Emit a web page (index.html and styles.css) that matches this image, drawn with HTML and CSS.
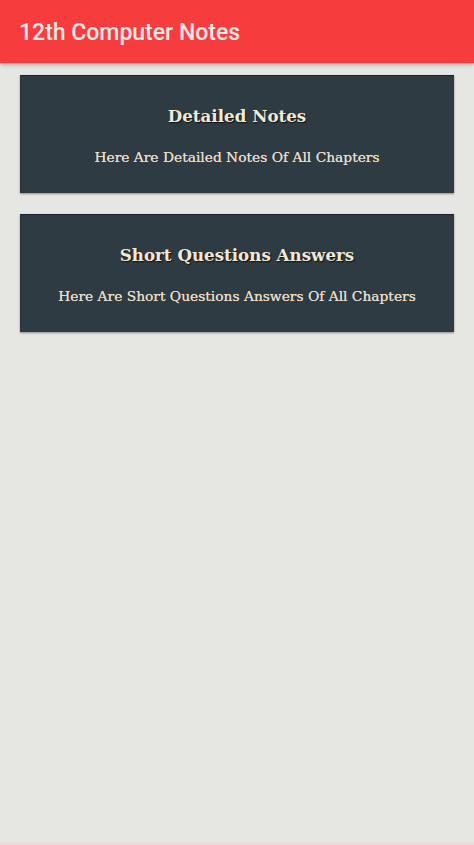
FILE: index.html
```html
<!DOCTYPE html>
<html>
<head>
<meta charset="utf-8">
<link rel="stylesheet" href="styles.css">
</head>
<body>
<header class="appbar"><span class="title">12th Computer Notes</span></header>
<main class="list">
  <section class="card">
    <h2 class="card-title">Detailed Notes</h2>
    <p class="card-sub">Here Are Detailed Notes Of All Chapters</p>
  </section>
  <section class="card">
    <h2 class="card-title">Short Questions Answers</h2>
    <p class="card-sub">Here Are Short Questions Answers Of All Chapters</p>
  </section>
</main>
</body>
</html>
```
FILE: styles.css
```css
html, body {
  margin: 0;
  padding: 0;
  height: 100%;
}
body {
  background: #e6e6e2;
  font-family: Roboto, "Noto Sans", sans-serif;
  border-bottom: 3px solid #ecdcda;
  box-sizing: border-box;
}
.appbar {
  height: 63px;
  background: #f73c3e;
  display: flex;
  align-items: center;
  padding-left: 19px;
  box-shadow: 0 2px 4px rgba(0,0,0,0.25);
}
.title {
  color: #fbe8e4;
  font-size: 23px;
  font-weight: 500;
  margin-top: 1px;
}
.list {
  display: flex;
  flex-direction: column;
  gap: 21px;
  padding: 12px 20px 0 20px;
}
.card {
  background: #2e3b43;
  height: 118px;
  box-sizing: border-box;
  display: flex;
  flex-direction: column;
  align-items: center;
  padding-top: 30px;
  box-shadow: 0 1px 2px rgba(0,0,0,0.4);
  border-top: 1px solid #1c2230;
}
.card-title {
  margin: 0;
  font-family: "DejaVu Serif", serif;
  font-weight: bold;
  font-size: 16.7px;
  color: #f2e8d6;
  text-shadow: 1px 1px 1px #111;
  line-height: 20px;
}
.card-sub {
  margin: 23px 0 0 0;
  font-family: "DejaVu Serif", serif;
  font-size: 13.8px;
  color: #e8dcc8;
  line-height: 16px;
  text-shadow: 0 0 0.5px #e8dcc8;
}
```
